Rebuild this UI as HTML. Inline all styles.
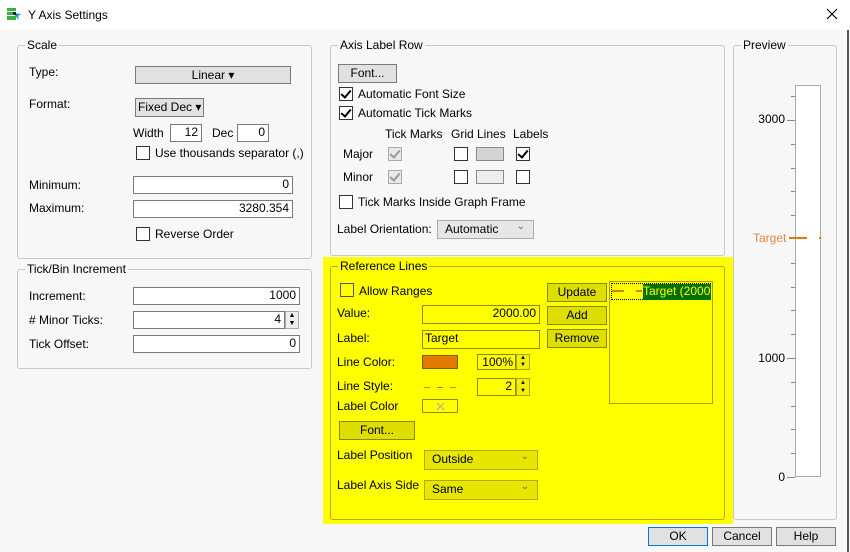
<!DOCTYPE html>
<html><head><meta charset="utf-8"><style>
*{box-sizing:border-box;margin:0;padding:0}
body{width:850px;height:552px;overflow:hidden;background:#f7f7f7;font-family:"Liberation Sans",sans-serif;font-size:12px;color:#000;position:relative}
.a{position:absolute;white-space:nowrap}
.t{position:absolute;white-space:nowrap;line-height:14px}
.grp{position:absolute;border:1px solid #c8c8c8;border-radius:3px}
.lg{position:absolute;top:-8px;left:7px;background:#f7f7f7;padding:0 2px;line-height:14px}
.in{position:absolute;background:#fff;border:1px solid #7a7a7a;text-align:right;padding-right:3px;line-height:15px;font-size:12px}
.btn{position:absolute;background:#e1e1e1;border:1px solid #7a7a7a;text-align:center;line-height:16px}
.cb{position:absolute;width:14px;height:14px;border:1px solid #333;background:#fff}
.ck::after{content:"";position:absolute;left:3px;top:0px;width:4px;height:8px;border:solid #000;border-width:0 2px 2px 0;transform:rotate(40deg)}
.dis{border-color:#aaa;background:#e8e8e8}
.dis::after{border-color:#999}
.y .btn{background:#dede00;border-color:#8a8a00}
.y .in{background:#ffff00;border-color:#8a8a00}
.dd{position:absolute;border:1px solid #aaa;background:#e6e6e6;padding-left:7px;line-height:17px}
.dd::after{content:"⌄";position:absolute;right:8px;top:-3px;font-size:10px;color:#666}
.sp{position:absolute;width:14px;border:1px solid #aaa;background:#eee}
.tk{position:absolute;height:1px;background:#888}
</style></head><body>
<div class="a" style="left:0;top:0;width:850px;height:30px;background:#fff"></div>
<svg class="a" style="left:6px;top:6px" width="16" height="16"><rect x="1" y="2" width="9" height="12" fill="#3cb043"/><rect x="1" y="5" width="9" height="1" fill="#fff"/><rect x="1" y="9" width="9" height="1" fill="#fff"/><path d="M7 7 L15 8 L12 10 L13 14 Z" fill="#1e88e5"/><rect x="7" y="6" width="3" height="3" fill="#222"/></svg>
<div class="t" style="left:28px;top:8px">Y Axis Settings</div>
<svg class="a" style="left:826px;top:8px" width="12" height="12"><path d="M1 1L11 11M11 1L1 11" stroke="#000" stroke-width="1.2"/></svg>
<div class="a" style="left:847px;top:30px;width:2px;height:522px;background:#555"></div>

<div class="grp" style="left:17px;top:45px;width:295px;height:214px"><div class="lg">Scale</div></div>
<div class="t" style="left:29px;top:65px">Type:</div>
<div class="btn" style="left:135px;top:66px;width:156px;height:18px">Linear ▾</div>
<div class="t" style="left:29px;top:97px">Format:</div>
<div class="btn" style="left:135px;top:98px;width:69px;height:19px;text-align:left;padding-left:2px">Fixed Dec ▾</div>
<div class="t" style="left:133px;top:126px">Width</div>
<div class="in" style="left:170px;top:124px;width:32px;height:18px">12</div>
<div class="t" style="left:212px;top:126px">Dec</div>
<div class="in" style="left:237px;top:124px;width:32px;height:18px">0</div>
<div class="cb" style="left:136px;top:146px"></div>
<div class="t" style="left:155px;top:146px">Use thousands separator (,)</div>
<div class="t" style="left:29px;top:178px">Minimum:</div>
<div class="in" style="left:133px;top:176px;width:160px;height:18px">0</div>
<div class="t" style="left:29px;top:201px">Maximum:</div>
<div class="in" style="left:133px;top:200px;width:160px;height:18px">3280.354</div>
<div class="cb" style="left:136px;top:227px"></div>
<div class="t" style="left:155px;top:227px">Reverse Order</div>

<div class="grp" style="left:17px;top:269px;width:295px;height:100px"><div class="lg">Tick/Bin Increment</div></div>
<div class="t" style="left:29px;top:289px">Increment:</div>
<div class="in" style="left:133px;top:287px;width:167px;height:18px">1000</div>
<div class="t" style="left:29px;top:313px"># Minor Ticks:</div>
<div class="in" style="left:133px;top:311px;width:152px;height:18px">4</div>
<div class="sp" style="left:285px;top:311px;height:18px;font-size:7px;line-height:8px;text-align:center">▲<br>▼</div>
<div class="t" style="left:29px;top:337px">Tick Offset:</div>
<div class="in" style="left:133px;top:335px;width:167px;height:18px">0</div>

<div class="grp" style="left:330px;top:45px;width:395px;height:211px"><div class="lg">Axis Label Row</div></div>
<div class="btn" style="left:338px;top:64px;width:59px;height:19px">Font...</div>
<div class="cb ck" style="left:339px;top:87px"></div>
<div class="t" style="left:358px;top:87px">Automatic Font Size</div>
<div class="cb ck" style="left:339px;top:106px"></div>
<div class="t" style="left:358px;top:106px">Automatic Tick Marks</div>
<div class="t" style="left:385px;top:127px">Tick Marks</div>
<div class="t" style="left:451px;top:127px">Grid Lines</div>
<div class="t" style="left:513px;top:127px">Labels</div>
<div class="t" style="left:343px;top:147px">Major</div>
<div class="cb ck dis" style="left:388px;top:147px"></div>
<div class="cb" style="left:454px;top:147px"></div>
<div class="a" style="left:476px;top:147px;width:28px;height:14px;background:#d4d4d4;border:1px solid #888"></div>
<div class="cb ck" style="left:516px;top:147px"></div>
<div class="t" style="left:343px;top:170px">Minor</div>
<div class="cb ck dis" style="left:388px;top:170px"></div>
<div class="cb" style="left:454px;top:170px"></div>
<div class="a" style="left:476px;top:170px;width:28px;height:14px;background:#eee;border:1px solid #888"></div>
<div class="cb" style="left:516px;top:170px"></div>
<div class="cb" style="left:339px;top:195px"></div>
<div class="t" style="left:358px;top:195px">Tick Marks Inside Graph Frame</div>
<div class="t" style="left:337px;top:222px">Label Orientation:</div>
<div class="dd" style="left:437px;top:220px;width:97px;height:19px">Automatic</div>

<div class="y">
<div class="a" style="left:323px;top:257px;width:410px;height:267px;background:#ffff00"></div>
<div class="grp" style="left:330px;top:266px;width:395px;height:254px;border-color:#b0b000"><div class="lg" style="background:#ffff00">Reference Lines</div></div>
<div class="cb" style="left:340px;top:283px;background:#ffff00;border-color:#555"></div>
<div class="t" style="left:359px;top:284px">Allow Ranges</div>
<div class="t" style="left:337px;top:306px">Value:</div>
<div class="in" style="left:422px;top:305px;width:118px;height:19px">2000.00</div>
<div class="t" style="left:337px;top:331px">Label:</div>
<div class="in" style="left:422px;top:330px;width:118px;height:19px;text-align:left;padding-left:2px">Target</div>
<div class="t" style="left:337px;top:355px">Line Color:</div>
<div class="a" style="left:422px;top:355px;width:36px;height:14px;background:#e07b00;border:1px solid #8a5500"></div>
<div class="in" style="left:477px;top:354px;width:39px;height:16px;padding-right:2px">100%</div>
<div class="sp" style="left:516px;top:354px;height:16px;background:#f0f000;border-color:#aa0;font-size:6px;line-height:7px;text-align:center">▲<br>▼</div>
<div class="t" style="left:337px;top:379px">Line Style:</div>
<div class="a" style="left:424px;top:387px;width:32px;height:1px;background:repeating-linear-gradient(90deg,#e07b00 0 6px,transparent 6px 13px)"></div>
<div class="in" style="left:477px;top:378px;width:39px;height:18px">2</div>
<div class="sp" style="left:516px;top:378px;height:18px;background:#f0f000;border-color:#aa0;font-size:6px;line-height:8px;text-align:center">▲<br>▼</div>
<div class="t" style="left:337px;top:399px">Label Color</div>
<div class="a" style="left:422px;top:399px;width:36px;height:14px;border:1px solid #8a8a00"><svg style="position:absolute;left:13px;top:2px" width="9" height="9"><path d="M1 1L8 8M8 1L1 8" stroke="#aaa" stroke-width="1"/></svg></div>
<div class="btn" style="left:339px;top:421px;width:76px;height:19px">Font...</div>
<div class="t" style="left:337px;top:448px">Label Position</div>
<div class="dd" style="left:424px;top:450px;width:114px;height:20px;background:#e6e600;border-color:#aa0">Outside</div>
<div class="t" style="left:337px;top:478px">Label Axis Side</div>
<div class="dd" style="left:424px;top:480px;width:114px;height:20px;background:#e6e600;border-color:#aa0">Same</div>
<div class="btn" style="left:547px;top:283px;width:60px;height:19px">Update</div>
<div class="btn" style="left:547px;top:306px;width:60px;height:19px">Add</div>
<div class="btn" style="left:547px;top:329px;width:60px;height:19px">Remove</div>
<div class="a" style="left:609px;top:281px;width:104px;height:123px;border:1px solid #aaa000"></div>
<div class="a" style="left:611px;top:283px;width:100px;height:17px;border:1px dotted #000"></div>
<div class="a" style="left:612px;top:290px;width:12px;height:2px;background:#e07b00"></div>
<div class="a" style="left:636px;top:290px;width:6px;height:2px;background:#e07b00"></div>
<div class="t" style="left:643px;top:284px;width:68px;height:16px;background:#007000;color:#ff0;line-height:15px">Target (2000</div>
</div>

<div class="grp" style="left:733px;top:45px;width:104px;height:475px"><div class="lg">Preview</div></div>
<div class="a" style="left:795px;top:85px;width:26px;height:392px;background:#fff;border:1px solid #aaa"></div>
<div class="tk" style="left:787px;top:120px;width:8px"></div>
<div class="tk" style="left:787px;top:358px;width:8px"></div>
<div class="tk" style="left:787px;top:477px;width:8px"></div>
<div class="tk" style="left:791px;top:96px;width:4px"></div>
<div class="tk" style="left:791px;top:144px;width:4px"></div>
<div class="tk" style="left:791px;top:168px;width:4px"></div>
<div class="tk" style="left:791px;top:191px;width:4px"></div>
<div class="tk" style="left:791px;top:215px;width:4px"></div>
<div class="tk" style="left:791px;top:263px;width:4px"></div>
<div class="tk" style="left:791px;top:287px;width:4px"></div>
<div class="tk" style="left:791px;top:310px;width:4px"></div>
<div class="tk" style="left:791px;top:334px;width:4px"></div>
<div class="tk" style="left:791px;top:382px;width:4px"></div>
<div class="tk" style="left:791px;top:406px;width:4px"></div>
<div class="tk" style="left:791px;top:429px;width:4px"></div>
<div class="tk" style="left:791px;top:453px;width:4px"></div>
<div class="t" style="left:745px;top:112px;width:40px;text-align:right">3000</div>
<div class="t" style="left:745px;top:351px;width:40px;text-align:right">1000</div>
<div class="t" style="left:745px;top:470px;width:40px;text-align:right">0</div>
<div class="t" style="left:753px;top:231px;color:#e8873a">Target</div>
<div class="a" style="left:789px;top:237px;width:18px;height:2px;background:#e07b00"></div>
<div class="a" style="left:819px;top:237px;width:2px;height:2px;background:#e07b00"></div>

<div class="btn" style="left:648px;top:527px;width:60px;height:19px;border-color:#0078d7">OK</div>
<div class="btn" style="left:712px;top:527px;width:60px;height:19px">Cancel</div>
<div class="btn" style="left:776px;top:527px;width:60px;height:19px">Help</div>
</body></html>
